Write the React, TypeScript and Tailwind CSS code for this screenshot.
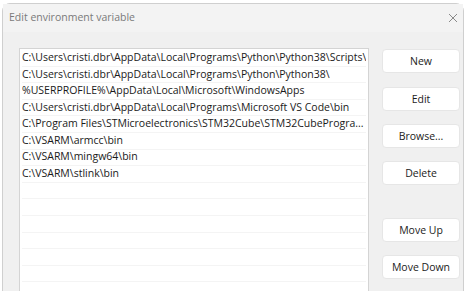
import React from "react";

const paths = [
  "C:\\Users\\cristi.dbr\\AppData\\Local\\Programs\\Python\\Python38\\Scripts\\",
  "C:\\Users\\cristi.dbr\\AppData\\Local\\Programs\\Python\\Python38\\",
  "%USERPROFILE%\\AppData\\Local\\Microsoft\\WindowsApps",
  "C:\\Users\\cristi.dbr\\AppData\\Local\\Programs\\Microsoft VS Code\\bin",
  "C:\\Program Files\\STMicroelectronics\\STM32Cube\\STM32CubeProgra...",
  "C:\\VSARM\\armcc\\bin",
  "C:\\VSARM\\mingw64\\bin",
  "C:\\VSARM\\stlink\\bin",
  "",
  "",
  "",
  "",
  "",
  "",
  "",
];

function Btn({ label, className = "" }: { label: string; className?: string }) {
  return (
    <button
      className={
        "block w-[78px] h-[24px] bg-white rounded-[4px] border border-[#e6e6e6] text-[10.5px] text-[#1b1b1b] leading-none " +
        className
      }
    >
      {label}
    </button>
  );
}

export default function App() {
  return (
    <div className="w-[474px] h-[291px] bg-white overflow-hidden pt-[3px] pl-[2px] font-['Open_Sans',sans-serif]">
      <div className="w-[462px] h-[300px] rounded-t-[8px] border border-[#cfcfcf] bg-[#f0f0f0]">
        <div className="h-[28px] flex items-center justify-between pl-[6px] pr-[4px] bg-[#f3f3f3]">
          <span className="text-[10.5px] text-[#7a7a7a]">Edit environment variable</span>
          <svg width="10" height="10" viewBox="0 0 10 10" className="mr-[1px]">
            <path d="M1 1 L9 9 M9 1 L1 9" stroke="#8a8a8a" strokeWidth="1" />
          </svg>
        </div>
        <div className="flex pl-[16px] pt-[16px]">
          <div className="w-[350px] h-[260px] bg-white border border-[#d4d4d4] pt-[1px] px-[2px]">
            {paths.map((p, i) => (
              <div
                key={i}
                className="h-[16.6px] border-b border-[#f4f4f4] flex items-center text-[10.5px] text-[#1a1a1a] whitespace-nowrap overflow-hidden"
              >
                {p}
              </div>
            ))}
          </div>
          <div className="ml-[13px] flex flex-col pt-[1px]">
            <Btn label="New" />
            <Btn label="Edit" className="mt-[14px]" />
            <Btn label="Browse..." className="mt-[13px]" />
            <Btn label="Delete" className="mt-[13px]" />
            <Btn label="Move Up" className="mt-[33px]" />
            <Btn label="Move Down" className="mt-[13px]" />
          </div>
        </div>
      </div>
    </div>
  );
}
